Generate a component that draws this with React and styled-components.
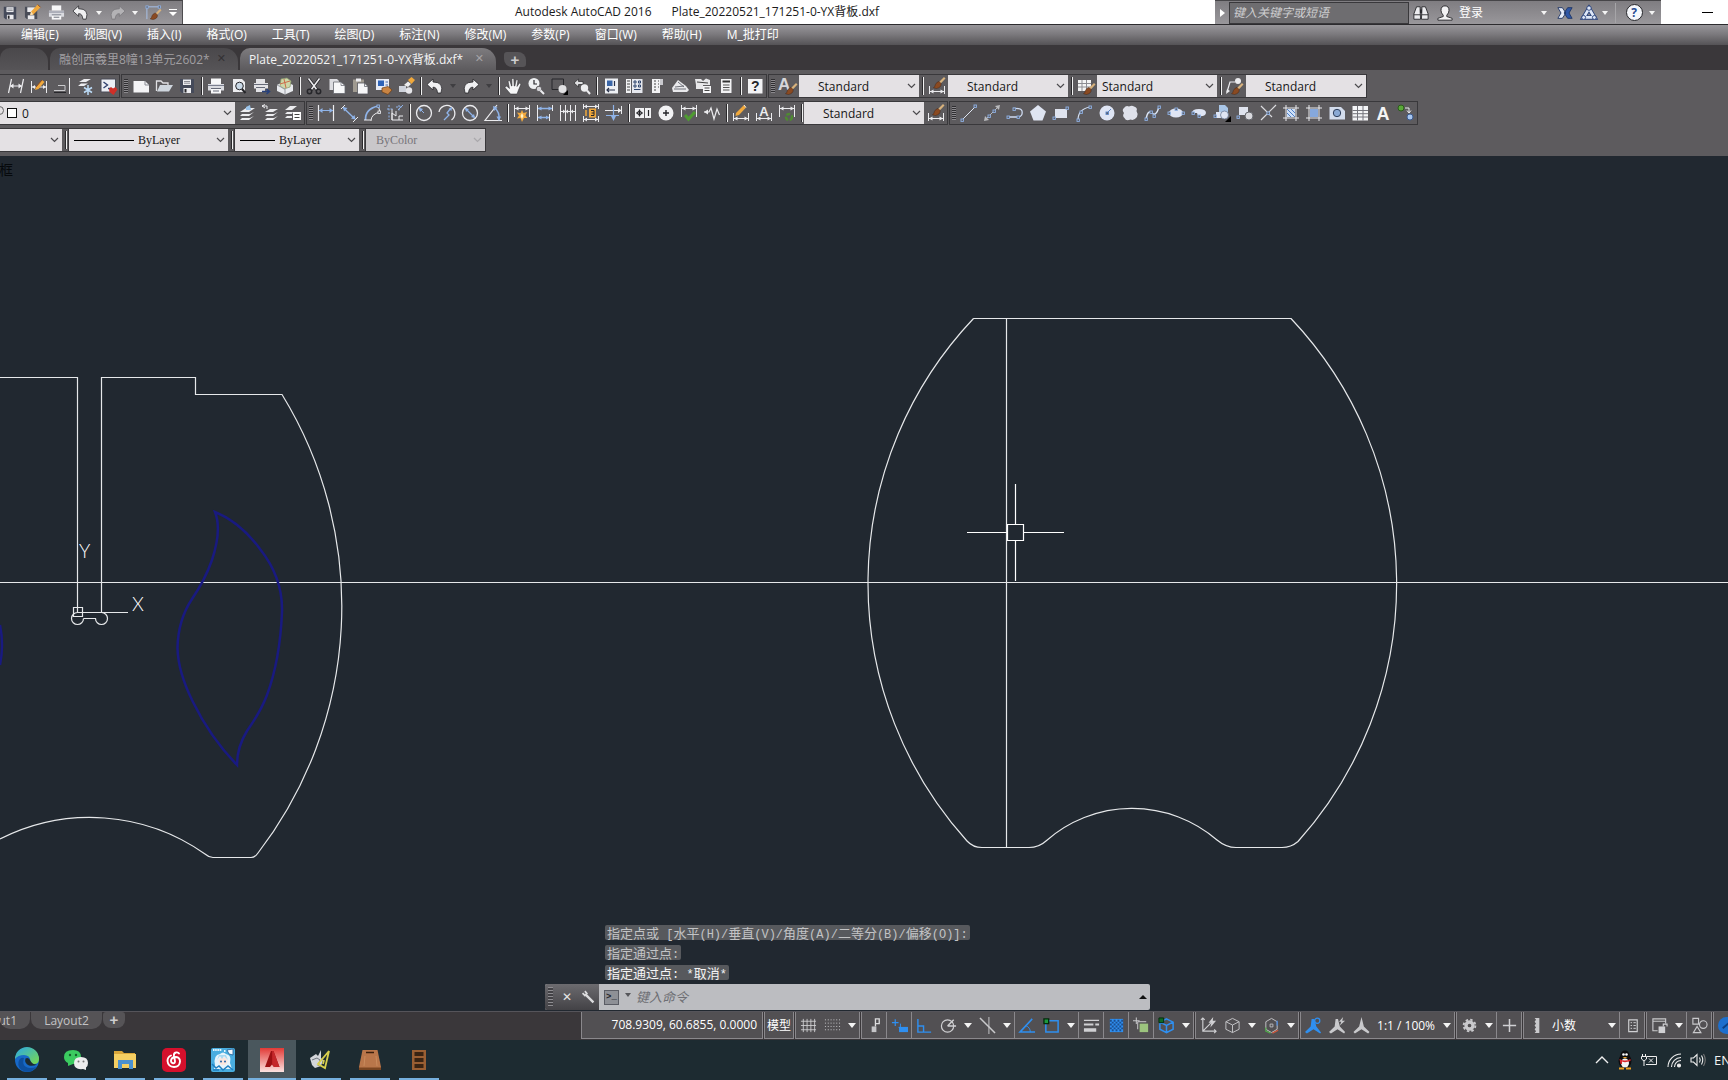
import React from "react";
import styled, { createGlobalStyle, css } from "styled-components";

const UI = '"Open Sans", "Noto Sans CJK SC", sans-serif';
const W = "#ececef";
const B = "#8fb3e8";
const G = "#b9babd";
const K = "#26262a";
const O = "#f0a83c";
const BR = "#8a4a22";
const BL = "#2f8ff0";

const Global = createGlobalStyle`
  *, *::before, *::after { box-sizing: border-box; }
  html, body, #root { height: 100%; }
  body { margin: 0; overflow: hidden; font-family: ${UI}; font-size: 13px; background: #212830; }
  button, input, select { font: inherit; color: inherit; margin: 0; padding: 0; border: 0; border-radius: 0; background: none; outline: 0; }
`;

/* ---------- icon drawing ---------- */
const p = (d, stroke = W, fill = "none", w = 1) => <path key={d} d={d} stroke={stroke} fill={fill} strokeWidth={w} />;
const f = (d, fill = W) => <path key={d} d={d} stroke="none" fill={fill} />;
const dot = (x, y, c = B) => <rect key={`${x}-${y}`} x={x - 1} y={y - 1} width="2.4" height="2.4" fill="#5d5b5e" stroke={c} strokeWidth=".9" />;
const brush = (x, y) => (
  <g key={`b${x}${y}`} transform={`translate(${x} ${y})`} stroke="none">
    <path d="M10 -1 11.500 .5 6.500 5.800 4.800 4.200Z" fill="#d8b27c" />
    <path d="M5 3.400 7.200 5.600Q7.500 9.500 2.500 10.500L-.5 9.800Q1.200 8.500 1.400 6.500 2.500 4 5 3.400Z" fill={BR} stroke="#3a1d0c" strokeWidth=".4" />
  </g>
);
const dim = <React.Fragment key="dim">{p("M1.500 1V13M16.500 1V13M2 4.500H16")}{f("M2 4.500 5.500 2.500V6.500ZM16 4.500 12.500 2.500V6.500Z")}</React.Fragment>;
const lowDim = <React.Fragment key="ld">{p("M1.500 9V17M16.500 9V17M2 14.500H16")}{f("M2 14.500 5.500 12.500V16.500ZM16 14.500 12.500 12.500V16.500Z")}</React.Fragment>;
const BACK = "M7 2 1 7.500 7 13V10.200Q11 10 11.500 16H15Q18.500 5 7 5Z";
const FORTH = "M11 2 17 7.500 11 13V10.200Q7 10 6.500 16H3Q-.5 5 11 5Z";

const ICONS = {
  save: [f("M2 2H16V16H4L2 14Z", "#454a5a"), f("M5 2.500H13V8H5Z"), f("M5.500 11H13V16H5.500Z"), f("M6.500 12H8.500V15.500H6.500Z", K), p("M6 4.500H12M6 6.200H12", "#8a8c94")],
  saveAs: [f("M1 3H14V16H3L1 14Z", "#4a4d58"), f("M3.500 3.500H11.500V8.500H3.500Z"), f("M4 12H11V16H4Z"), f("M14.500 0.500 17.500 3.500 10 11 6.500 12 7.500 8Z", O), p("M14.500 .5 17.500 3.500", BR), f("M7.500 8 10 11 6.500 12Z", "#f6e0b5")],
  print: [f("M4 1.500H14V7H4Z", "#f7f7f8"), f("M1 7H17V13.500H1Z", "#dadbe0"), p("M1 8.500H17", "#7c8090"), f("M4 11H14V16.500H4Z", "#f7f7f8"), p("M4 11.500H14M6 14H12", "#666a78")],
  undo: [p(BACK, K, "#f0f0f2", .8)],
  redo: [p(FORTH, K, "#f0f0f2", .8)],
  redoDim: [p(FORTH, "#77767a", "#b3b2b5", .8)],
  workspace: [p("M2 16V3H15", "#a9c3ec"), dot(2, 3), dot(15, 3), brush(6, 6)],
  binoc: [f("M4 2H8V6L8.500 16H1V10Z"), f("M10 2H14L17 10V16H9.500L10 6Z"), p("M4 2H8V6L8.500 16H1V10ZM10 2H14L17 10V16H9.500L10 6ZM1 11H8M10 11H17", K), f("M8 5H10V9H8Z", K)],
  user: [p("M9 1Q13.500 1 13.500 6 13.500 9 11 11.500V13L17 15V17H1V15L7 13V11.500Q4.500 9 4.500 6 4.500 1 9 1Z", K, "#f3f3f5")],
  exchange: [f("M1 3H6L10 9 6 15H1L4.500 9Z", "#e5ebf7"), f("M17 3H12L8 9 12 15H17L13.500 9Z", "#2f57a6"), p("M1 3H6L10 9 6 15H1L4.500 9ZM17 3H12L8 9 12 15H17L13.500 9Z", "#1e3566")],
  a360: [p("M9 4 15 14H3Z", "#27407a", "none", 5), p("M9 4 15 14H3Z", "#dfe8f8", "none", 3), <circle key="a" cx="9" cy="3.500" r="2.500" fill="#dfe8f8" stroke="#27407a" />, <circle key="b" cx="3" cy="14" r="2.200" fill="#dfe8f8" stroke="#27407a" />, <circle key="c" cx="15" cy="14" r="2.200" fill="#dfe8f8" stroke="#27407a" />],
  dimA: [p("M1.500 16 4.500 2M13.500 16 16.500 2M3 9H15", W, "none", 1.200), f("M3 9 6.500 6.500V11.500ZM15 9 11.500 6.500V11.500Z")],
  dimB: [p("M1.500 4V16M16.500 4V16M2 10H16"), f("M2 10 5 8V12ZM16 10 13 8V12Z"), f("M6 10 12 3 14.500 5 8.500 12 5 13Z", O), p("M6 10 12 3", BR)],
  dimC: [p("M16.500 1V17", W), p("M1 13.500H12V8.500H5", "#c9c9cc"), p("M1 15.500H13", K)],
  freeze: [f("M3 5 8 2H15L10 5ZM2 9 5 6.500H12L8 9Z"), p("M12 8V18M8 10.500 16 15.500M16 10.500 8 15.500", "#bcdcf8", "none", 1.500)],
  cmd: [p("M2 2H16.500V15H2Z", "#4a4d58", "#eceef4"), p("M4.500 5 8.500 8 4.500 11M9 11.500H12", "#30406e", "none", 1.400), f("M10 12 12 10 14 11.500 16.500 10 18.500 12.500 14.500 18 10.500 15Z", "#cf2f28")],
  newFile: [f("M1.500 4H13L17 8V15.500H1.500Z", "#f4f4f6"), p("M13 4V8H17", "#8a8c94")],
  open: [p("M1.500 14V4H6L8 6H13V8", "#e0e0e4", "none", 1.300), f("M5 8H18L14 14.500H2Z", "#cfd6de")],
  preview: [f("M3 2H12L15 5V15H3Z"), <circle key="c" cx="9.500" cy="9" r="3.800" fill="#c9d8e6" stroke={K} />, p("M12 12 15.500 16", K, "none", 2)],
  publish: [f("M3 2H12V6H3ZM1 6H15V11.500H1ZM3 10H12V15H3Z", "#e2e2e6"), p("M1 7.500H15M3 10.500H12", "#666a78"), p("M9 14.500H16M13.500 12 16.500 14.500 13.500 17", "#27407a", "none", 1.500)],
  print3d: [f("M1 8 9 4 17 8V14L9 17.500 1 14Z", "#e8eaee"), p("M5 2 11 1 15 4 14 10 8 12 4 9Z", "#8a9a6a", "#cdd8a8", .7), p("M8 2 10 11M4 7 14 4", "#ce6b4a"), p("M1 8 9 12V17", "#9a9ca4")],
  cut: [p("M3.500 1.500 12 13M14.500 1.500 6 13", K, "none", 3), p("M3.500 1.500 12 13M14.500 1.500 6 13", W, "none", 1.500), <circle key="a" cx="4.500" cy="14.500" r="2.200" stroke={K} strokeWidth="1.500" />, <circle key="b" cx="13.500" cy="14.500" r="2.200" stroke={K} strokeWidth="1.500" />],
  copy: [f("M1.500 2H9L11 4V13H1.500Z", "#dcdce0"), p("M5.500 5H13L17 8.500V16.500H5.500Z", "#66686e", "#f8f8f9", .8), p("M13 5V8.500H17", "#73757d", "none", .8)],
  paste: [f("M2 2.500H13V15H2Z", "#a09a90"), f("M5 1.500H10V4.500H5Z"), p("M6.500 6H13.500L17 9.500V17H6.500Z", "#55575d", "#f6f6f8", .8), p("M13.500 6V9.500H17", "#66686e", "none", .8)],
  match: [f("M2 2H15V13H2Z", "#e6eaf4"), f("M4 3.500H10V9H4Z", "#2e63b8"), p("M11.500 5H14M11.500 8H14", "#4a6aa8"), p("M8 11 14 9.500 18 13 14 17.500 8 15Z", "#6a3c14", "#c98443", .7)],
  matchP: [f("M2 9H9V15H2Z", "#cfd3dc"), <circle key="c" cx="12" cy="13.500" r="3.200" fill="#e6e6ea" stroke="none" />, f("M11 3 14.500 7 18 3 14.500 0Z", O), f("M7 8 11 4.500 14 7 11 10Z", "#eee")],
  hand: [p("M6.500 17 1 10.500 2.500 9 5.500 11.500 4 4 5.800 3.500 7.500 9H8L7.800 1.500H9.800L10.200 9H10.800L12.300 2.500 14 3 13 9.500 15.500 6 17 7 14.500 13 13 17Z", K, "#f6f6f7", .5)],
  zoomRt: [<circle key="c" cx="7" cy="6.500" r="5.500" fill="#eef0f2" stroke="none" />, p("M7 3V7H10", K, "none", 1.200), <circle key="d" cx="12" cy="12" r="2.800" fill="#d4d4d8" stroke="#5d5b5e" />, p("M13.500 13.500 17 17", W, "none", 2)],
  zoomWin: [p("M2 2H13.500V12.500H2Z", K), <circle key="d" cx="12.500" cy="12" r="4" fill="#e2e2e4" stroke="none" />, f("M18 13V18H13Z", "#000")],
  zoomPrev: [p("M1 6 5.500 2V4.500H10V7.500H5.500V10Z", K, "#e0e0e2", .7), <circle key="d" cx="11.500" cy="11" r="3.700" fill="#eeeef0" stroke="none" />, p("M14 13.500 17 17", W, "none", 2)],
  props: [f("M3 1.500H16V16.500H3Z", "#eef0f4"), f("M5 3.500H10.500V9H5Z", "#3a66a8"), p("M12.500 4V9M5 13H13M7 11 5 13 7 15", "#27304a", "none", 1.200)],
  dc: [f("M1 2H6V16H1Z", "#f2f2f4"), p("M2 4H5M2 7H5M2 10H5M2 13H5", "#444"), f("M7 2H17.500V16H7Z", "#e6e8ee"), p("M9 4H11V6H9ZM13.500 4H15.500V6H13.500ZM9 8H11V10H9ZM13.500 8H15.500V10H13.500ZM9 12.500H15.500", "#30466e")],
  tool: [f("M4 2H12V16H4Z", "#f2f2f4"), f("M12 2H15V8H12Z", "#c9c9ce"), p("M6 4H8M6 7H8M6 10H8M6 13H8M10 4H11M10 7H11M10 10H11", "#444")],
  sheet: [f("M1 11 7 3 15 9 18 13 16 15H2Z", "#e9e9ec"), p("M3 12H15M4 10 13 9M7 5 13 10", "#70727a")],
  markup: [f("M1 2H7L9 4 12 1.500 16 3V8H9V12H2V8Z", "#e8e8ea"), f("M9 9H17V16H9Z", "#f6f6f8"), p("M10.500 11H15.500M10.500 13.500H15.500M3 5 14 6", "#444")],
  calc: [f("M4 2H14.500V16H4Z", "#f2f2f4"), p("M5.500 4.500H13", "#333", "none", 2), p("M6 8H12.500M6 10.500H12.500M6 13H12.500", "#555", "none", 1.200)],
  help: [f("M2 2H16.500V16.500H2Z", "#f2f2f4"), <text key="t" x="9.200" y="14" textAnchor="middle" fontFamily="Liberation Sans" fontWeight="700" fontSize="14" fill={K} stroke="none">?</text>],
  styleA: [<text key="t" x="-1" y="13" fontFamily="Liberation Sans" fontSize="17" fontWeight="700" fill="#d6d6da" stroke="none">A</text>, brush(7, 7)],
  styleD: [brush(6, 1), lowDim],
  styleT: [f("M1 3H14V14H1Z", "#f4f4f4"), p("M1 6.500H14M1 10H14M5 3V14M9.500 3V14", "#8d8d92"), brush(7, 7)],
  styleL: [p("M1 15 4 5H9", W, "none", 1.200), f("M0 17 1 12 4 14Z"), <circle key="c" cx="12" cy="4" r="3" fill={W} stroke="none" />, brush(6, 7)],
  layer1: [f("M2 8 8 4H17L11 8ZM2 12 4 10H12L16 8 11 12ZM2 16 4 14H12L16 12 11 16Z"), f("M8 3 12 1 13 6H8Z", "#9cc4ea")],
  layer2: [f("M4 8 9 5H17L12 8ZM4 12 6 10H13L17 8 12 12ZM4 16 6 14H13L17 12 12 16Z"), p("M1 2H6M1 2 4 .5M1 2 4 4M6 2V5")],
  layer3: [f("M1 6 6 2H13L8 6ZM1 10 3 8H9L8 10ZM1 14 3 12H8V14Z"), f("M9 8H17V16H9Z", "#fff"), p("M10.500 10.500H15.500M10.500 13.500H15.500", "#444")],
  dLin: [p("M1.500 1V17M16.500 1V17", W, "none", 1.200), p("M2 6.500H16", B), f("M2 6.500 5.500 4V9ZM16 6.500 12.500 4V9Z", B)],
  dAli: [p("M1 5 5 1M13 18 18 13"), p("M3 3.500 15 15", B, "none", 1.400), f("M3 3 7.500 4 4 7.500ZM15.500 15.500 11 14.500 14.500 11Z", B)],
  dArc: [p("M2.500 16Q2 5 15 2", B, "none", 1.700), p("M8 17Q8 10 17 8M1 16H8M15 1 17 8"), dot(15, 2), dot(16, 8, W)],
  dOrd: [p("M6 5V16H17M6 16V9L10 12V7M13 16V12H17"), <path key="d" d="M1 5H8M3 1V16M10 3H17M13 1V8" stroke={B} strokeDasharray="2 1.500" />, p("M12 6 17 1", B)],
  dRad: [<circle key="c" cx="9" cy="9" r="7.500" stroke={W} strokeWidth="1.300" />, p("M9 9 4 4", B), f("M3.500 3.500 8 5 5 8Z", B)],
  dJog: [p("M1 8A8 8 0 1 1 13.500 16", W, "none", 1.300), p("M6 16 11 11 9 9 13 4", B, "none", 1.300), f("M14 3 13.500 7 10.500 5Z", B)],
  dDia: [<circle key="c" cx="9" cy="9" r="7.500" stroke={W} strokeWidth="1.300" />, p("M4.500 4.500 13.500 13.500", B, "none", 1.200), f("M4 4 8 5 5 8ZM14 14 10 13 13 10Z", B)],
  dAng: [p("M13 1 1 16.500H18", W, "none", 1.200), p("M10 3Q16 8 15 16", B, "none", 1.500), f("M9 2 13.500 3.500 10 7ZM15 17 12.500 12.500H17Z", B)],
  dQuick: [dim, f("M9 6 10.500 9 14 8 12.500 11.500 14.500 14 11 14 9 18 7.500 14 4 14.500 6 11.500 4 8.500 7.500 9Z", O), f("M9 9 10.500 12 9 15 7.500 12Z", "#fff1c4")],
  dBase: [p("M1.500 1V17M16.500 1V7M13.500 10V17"), p("M2 4.500H16M2 13.500H13", B, "none", 1.300), f("M2 4.500 5.500 2.500V6.500ZM16 4.500 12.500 2.500V6.500ZM2 13.500 5.500 11.500V15.500ZM13 13.500 10 11.500V15.500Z", B)],
  dCont: [p("M1.500 1V17M6.500 1V17M11.500 1V17M16.500 1V17M2 7.500H16"), f("M6.500 7.500 4 5.500V9.500ZM6.500 7.500 9 5.500V9.500ZM11.500 7.500 14 5.500V9.500Z")],
  dSpace: [p("M1.500 0V5M16.500 0V5M1.500 12V18M16.500 12V18M2 2.500H16M2 15.500H16"), f("M2 2.500 5 .5V4.500ZM16 2.500 13 .5V4.500ZM2 15.500 5 13.500V17.500ZM16 15.500 13 13.500V17.500Z"), f("M7 4.500H14V13.500H7Z", O), p("M9 6.500H12V11.500H9M9.500 9H12", K), p("M4 6V12", O, "none", 1.500)],
  dBreak: [p("M0 6.500H17M16.500 2V10"), f("M16.500 6.500 13 4V9Z"), p("M8.500 1V15M1 11.500H14", B, "none", 1.200), f("M8.500 17 6 12H11Z", B)],
  tol: [f("M1 4H10V14H1ZM11 4H17V14H11Z", "#f2f2f4"), <circle key="c" cx="5.500" cy="9" r="2" stroke={K} />, p("M5.500 5.500V12.500M2 9H9M14.500 6V12", K, "none", 1.200)],
  center: [<circle key="c" cx="9" cy="9" r="7.500" fill="#f2f2f4" stroke="none" />, p("M9 6V12M6 9H12", K, "none", 1.400)],
  inspect: [dim, p("M5 11 8.500 15 15 8", "#4f9a32", "none", 3.200)],
  jogLin: [p("M1 8H6L8 4 11 15 14 5 16.500 11", W, "none", 1.200), f("M1 8 5 5.500V10.500Z")],
  dimEd: [lowDim, f("M4 9 12 1 14 3.500 7 11 3.500 12Z", O), p("M12 1 14 3.500", W)],
  dimTx: [lowDim, <text key="t" x="9" y="11.500" textAnchor="middle" fontFamily="Liberation Sans" fontWeight="700" fontSize="13" fill={W} stroke="none">A</text>],
  dimUp: [dim, <circle key="c" cx="11" cy="13" r="3" stroke="#4f8a32" strokeWidth="2.400" strokeDasharray="4 1.500" />],
  line: [p("M3 15 15 3", "#dfe6f2"), dot(2, 16), dot(15, 2)],
  xline: [p("M3 15 15 3", G), f("M1 17 2 12 6 16ZM17 1 12 2 16 6Z", G), dot(6, 12), dot(11, 7)],
  pline: [p("M3 13H12Q17 12.500 16 7 15 4 7 4.500", "#cfdcf2", "none", 1.300), dot(2, 13), dot(12, 13), dot(8, 5)],
  polygon: [f("M9 1 17 7.500 13.500 16.500H4.500L1 7.500Z", "#dfe5f2")],
  rect: [f("M3 5H15V14H3Z", "#dfe3ee"), dot(2, 14), dot(15, 4)],
  arc: [p("M3 16Q3 5 15 3", "#d5e0f2", "none", 1.200), dot(3, 16), dot(6, 8), dot(15, 3)],
  circle: [<circle key="c" cx="9" cy="9" r="7.500" fill="#dfe5f4" stroke="none" />, p("M9 9 13 5", "#5b86c8"), dot(9, 9, "#5b86c8")],
  cloud: [f("M3 4Q5 1 8 2.500 11 1 13 2.500 17 3.500 15.500 7 17.500 10 16 13 13 17 9.500 15.500 5 17.500 3.500 14 1 12 3 9 .5 6 3 4Z", "#dfe1ea")],
  spline: [p("M2 15Q4 5 8 9T15 3", "#dce6f6", "none", 1.400), dot(2, 15), dot(7, 8), dot(10, 12), dot(15, 3)],
  ellipse: [<ellipse key="c" cx="9" cy="9" rx="7" ry="4.500" fill="#dfe5f4" stroke="none" />, dot(2, 9), dot(16, 9), dot(9, 5)],
  ellArc: [f("M2 9Q2 5 9 5T16 9Q15 13 8 12L7 9Z", "#dfe5f4"), dot(3, 9), dot(9, 12)],
  insert: [f("M6 1H12L15 4V9H6Z", "#a9c6e8"), f("M3 8H10V14H3Z", "#dfe5f4"), <circle key="c" cx="11.500" cy="11" r="4" fill="#dfe5f4" stroke="#5d6f8c" strokeWidth=".7" />, f("M18 12V18H12Z", "#000"), dot(2, 12)],
  block: [f("M3 3H12V11H3Z", "#dfe3ee"), <circle key="c" cx="13" cy="12" r="4" fill="#d9d9de" stroke="#66686e" />, dot(2, 13)],
  point: [p("M2 2 9 9 17 1M2 16 9 9 13 13", "#dcdce0", "none", 1.200), dot(9, 9)],
  hatch: [p("M1 4H17M1 14H17M4 1V17M14 1V17"), f("M5 5H13V13H5Z", "#cfe0f8"), p("M5 9 9 13M5 5 13 13M9 5 13 9", "#4f80c8")],
  gradient: [p("M1 4H17M1 14H17M4 1V17M14 1V17"), f("M5 5H13V13H5Z", "#86a8dc")],
  region: [f("M1.500 3H13L17 7V15.500H1.500Z", "#d3dcec"), <circle key="c" cx="9" cy="9" r="3.700" fill="#8aa9d4" stroke="#2f3f5c" />],
  table: [f("M1.500 2H17V16.500H1.500Z", "#f4f5f7"), p("M1.500 6.500H17M1.500 9.700H17M1.500 13H17M6.500 2V16.500M12 2V16.500", "#74757c")],
  mtext: [<text key="t" x="9" y="15.500" textAnchor="middle" fontFamily="Liberation Sans" fontSize="18" fontWeight="700" fill="#f4f4f5" stroke="none">A</text>],
  addSel: [<circle key="a" cx="4" cy="4" r="3" fill="#5aa83a" stroke="#2b5a1b" />, <circle key="b" cx="13" cy="13" r="3" fill="#a8c6f0" stroke="#3a5a90" />, p("M8 4H12V8M10 6.500 12 9 14 6.500", W)],
  wrench: [p("M6 6 16 16", "#dcdcde", "none", 3), p("M2 4 5 7 7.500 4.500 5 1.500", "#dcdcde", "none", 2.200)],
  /* status bar */
  grid: [p("M3.500 2V16M7.500 2V16M11.500 2V16M15.500 2V16M1 4.500H17M1 9H17M1 13.500H17", "#d2d2d4", "none", .9)],
  snap: [<path key="s" d="M1 3H17M1 6.500H17M1 10H17M1 13.500H17" stroke="#cfcfd2" strokeDasharray="1 2" />],
  infer: [p("M10 10V2H14V7H10", "#dcdcde", "none", 1.400), f("M6 10H11V16H6Z", "#c5c5c8")],
  dyn: [p("M1 6H8M4.500 2.500V9.500", BL, "none", 1.300), p("M10 7V11H8", BL), f("M8.500 10.500H18V16H8.500Z", BL)],
  ortho: [p("M2 2V16H16M2 9.500H8V16", BL, "none", 1.500)],
  polar: [<circle key="c" cx="8" cy="9.500" r="6.500" stroke="#d0d0d3" strokeWidth="1.300" />, p("M8 9.500H17M8 9.500 14.500 3", "#d0d0d3", "none", 1.500)],
  iso: [p("M1 1 17 17", "#c9c9cc", "none", 1.600), p("M10.500 0V18", "#c9c9cc", "none", 1)],
  otrack: [p("M14 2 1 16H17", BL, "none", 1.600), p("M7 9Q12 11 12 16", BL)],
  osnap: [p("M3 4H16V16H3Z", BL, "none", 1.600), p("M1 2H6V7H1Z", "#032a0c", "#1d9a3c", 1.400)],
  lwt: [f("M1 3H17V4.200H1ZM1 7H11V9H1ZM13 7H17V9H13ZM1 12H14V15.500H1Z", "#d0d0d3")],
  transp: [f("M2 2H16V16H2Z", BL), <path key="x" d="M2 4H16M2 8H16M2 12H16" stroke="#1c4f90" strokeWidth="2" strokeDasharray="2 2" />, <path key="y" d="M4 6H16M4 10H16M4 14H16" stroke="#1c4f90" strokeWidth="2" strokeDasharray="2 2" />],
  cycle: [f("M7 7H16V16H7Z", "#9cc47e"), p("M5 13V5H14M0 4H7M3.500 .5V7.500", "#d0d0d3")],
  osnap3: [p("M9 2 16 5.500V13L9 16.500 2 13V5.500ZM2 5.500 9 9 16 5.500M9 9V16", BL, "none", 1.600), p("M1 1H6V6H1Z", "#032a0c", "#0f6a24", 1)],
  ducs: [p("M3 1V15H17M3 15 13 5M1 3 3 1 5 3M15 13 17 15 15 17", "#d0d0d3", "none", 1.200), f("M14 0 9 6H12L11 11 17 4H13.500Z", "#d0d0d3")],
  cube: [p("M9 1.500 16 5V13L9 16.500 2 13V5ZM2 5 9 8.500 16 5M9 8.500V16.500", "#c5c5c8")],
  gizmo: [p("M9 1.500 15 5V13L9 16.500 3 13V5Z", "#c5c5c8"), p("M3 11 3 15 8 17", "#4fa84a", "none", 1.400), p("M10 17 16 14", "#d0573a", "none", 1.400), p("M15 4V9", "#4a86d8", "none", 1.400), p("M7.500 7.500H10.500V10.500H7.500Z", G)],
  annoB: [f("M7 2H10L12 10 17 16.500 16 17.500 9 13 2 17.500 0 16 6 10Z", BL), <circle key="c" cx="13" cy="4" r="2.700" stroke={BL} strokeWidth="1.300" />],
  annoY: [f("M7 2H9.500L11.500 10 17 16 16 17.500 9 13 2 17.500 0 16 6 10Z", "#c9c9cc"), f("M15 0 10.500 5H13L11.500 9 17 4H14Z", "#c9c9cc")],
  annoA: [f("M9 0 11.500 10 17.500 16 16 17.500 9 13 2 17.500 .5 16 6.500 10Z", "#c9c9cc")],
  gear: [<circle key="c" cx="9" cy="9" r="3.700" stroke="#c9c9cc" strokeWidth="3.500" />, <circle key="d" cx="9" cy="9" r="6.200" stroke="#c9c9cc" strokeWidth="2" strokeDasharray="2.600 2.270" />],
  plus: [p("M9 2V16M2 9H16", "#d0d0d3", "none", 1.600)],
  ruler: [f("M7 1H12V17H7L8.500 15 7 13 8.500 11 7 9 8.500 7 7 5 8.500 3Z", "#c9c9cc")],
  qprops: [p("M5 3H14V15.500H5Z", "#d0d0d3", "none", 1.200), p("M7 6H8.500M10 6H12.500M7 9H8.500M10 9H12.500M7 12H8.500M10 12H12.500", "#d0d0d3")],
  lockUi: [p("M7 14.500H2V2H15.500V7M2 4.500H15.500", "#c9c9cc", "none", 1.200), f("M8 10H15V17H8Z", "#d0d0d3"), p("M13 10V7.500H17V10", "#d0d0d3", "none", 1.200)],
  isolate: [p("M2 1.500H8V7.500H2Z", "#c9c9cc", "none", 1.200), <circle key="c" cx="13" cy="8" r="4" stroke="#c9c9cc" strokeWidth="1.200" />, p("M6.500 10 10.500 16.500H2.500Z", "#c9c9cc", "none", 1.200)],
  perf: [<circle key="c" cx="9" cy="9" r="9" fill="#1d6fce" stroke="none" />, p("M5 12 12 6", "#0d3f80", "none", 2)],
};

const Svg = styled.svg`display: block; flex: none; overflow: visible;`;
const Icon = ({ name, size = 18 }) => (
  <Svg width={size} height={size} viewBox="0 0 18 18" fill="none" stroke={W} aria-hidden="true">{ICONS[name]}</Svg>
);
const Chevron = () => (
  <Svg width="9" height="6" viewBox="0 0 9 6" fill="none" stroke="currentColor" strokeWidth="1.200"><path d="M1 1 4.500 4.500 8 1" /></Svg>
);

/* ---------- shell ---------- */
const Shell = styled.div`display: flex; flex-direction: column; height: 100vh; overflow: hidden;`;

const TitleBar = styled.header`
  display: flex; height: 25px; flex: none; background: #fff; border-bottom: 1px solid #2c2b2e; color: #1b1b1b;
`;
const metal = css`background: linear-gradient(#7f7d81, #99979b); border-top: 1px solid #464548;`;
const QuickAccess = styled.div`
  ${metal} display: flex; align-items: center; width: 183px; flex: none; border-right: 1px solid #4e4d50;
`;
const QuickButton = styled.button`
  display: flex; align-items: center; justify-content: center; width: ${(q) => q.$w || 24}px; height: 22px; flex: none;
`;
const Caret = styled.i`
  display: block; flex: none; border: ${(q) => q.$s || 3}px solid transparent; border-bottom: 0;
  border-top: ${(q) => (q.$s || 3) + 1}px solid ${(q) => q.$c || "#f4f4f4"};
`;
const More = styled.i`
  display: block; width: 8px; border-top: 1px solid #fff; padding-top: 2px;
  &::after { content: ""; display: block; border: 4px solid transparent; border-top-color: #fff; border-bottom: 0; }
`;
const Title = styled.h1`
  display: flex; gap: 20px; flex: 1; margin: 0; padding-left: 332px; font-size: 12px; font-weight: 400; line-height: 23px; white-space: pre;
`;
const InfoCenter = styled.div`${metal} display: flex; align-items: center; width: 446px; flex: none; color: #fff;`;
const InfoArrow = styled.button`
  width: 14px; height: 22px; display: flex; align-items: center; justify-content: center;
  &::after { content: ""; border: 4px solid transparent; border-left: 5px solid #fff; border-right: 0; }
`;
const Search = styled.input`
  width: 180px; height: 22px; background: #6e6d70; border: 1px solid #39383b; padding: 0 3px; font-size: 12px; font-style: italic;
  &::placeholder { color: #cfcfd1; opacity: 1; }
`;
const SignIn = styled.button`display: flex; align-items: center; justify-content: space-between; width: 96px; padding: 0 6px 0 2px; font-size: 12px; line-height: 22px; color: #fff;`;
const Rule = styled.span`width: 1px; height: 20px; background: #a6a5a8; margin: 0 6px;`;
const HelpBadge = styled.button`
  width: 17px; height: 17px; border: 1px solid #26262a; border-radius: 50%; background: #f5f7fb; color: #274a92;
  font-weight: 700; font-size: 12px; line-height: 15px; text-align: center; flex: none;
`;
const Minimize = styled.button`
  width: 67px; flex: none; display: flex; align-items: center; justify-content: center; padding-left: 26px;
  &::after { content: ""; width: 11px; height: 1px; background: #000; }
`;

const MenuBar = styled.nav`
  display: flex; align-items: center; gap: 1px; height: 20px; flex: none; padding-left: 9px;
  background: linear-gradient(#98969a, #7c7a7e 45%, #555356); color: #fff;
`;
const MenuItem = styled.button`padding: 0 12px; font-size: 12px; line-height: 20px; white-space: nowrap;`;

const FileTabs = styled.div`
  display: flex; align-items: flex-end; gap: 2px; height: 25px; flex: none; background: #3a373a; padding-top: 3px;
`;
const FileTab = styled.button`
  display: flex; align-items: center; justify-content: space-between; height: 22px; width: ${(q) => q.$w}px; flex: none;
  padding: 0 12px 0 9px; font-size: 12px; white-space: nowrap; border-radius: 10px 14px 0 0;
  color: ${(q) => (q.$on ? "#f4f4f4" : "#a19fa2")};
  background: ${(q) => (q.$on ? "linear-gradient(#7d7b7e, #5d5b5e)" : "linear-gradient(#4a484b, #565457)")};
`;
const Close = styled.span`color: ${(q) => (q.$on ? "#a5a3a6" : "#333134")}; font: 700 11px/20px "DejaVu Sans", sans-serif;`;
const PlusTab = styled.button`
  display: flex; align-items: center; justify-content: center; width: 22px; height: ${(q) => q.$h || 15}px; margin: ${(q) => q.$m}; flex: none;
  background: #565457; border-radius: ${(q) => q.$r}; color: #cdccce; font: 700 15px/14px "Liberation Sans", sans-serif;
`;

const Toolbars = styled.section`
  display: flex; flex-direction: column; gap: 3px; height: 86px; flex: none; padding-top: 4px; background: #5d5b5e; overflow: hidden;
`;
const ToolRow = styled.div`display: flex; gap: ${(q) => q.$gap}px; height: 24px; flex: none;`;
const Group = styled.div`
  display: flex; align-items: center; height: 24px; flex: none; padding-left: ${(q) => q.$pad || 0}px;
  border: 1px solid #39383b; border-width: 1px 1px 1px ${(q) => (q.$open ? 0 : 1)}px;
`;
const Grip = styled.span`
  width: 4px; height: 14px; margin: 0 1px 0 2px; flex: none;
  background: repeating-linear-gradient(#2f2e31 0 1px, #8b898d 1px 2px);
`;
const Tool = styled.button`width: 23px; height: 22px; flex: none; display: flex; align-items: center; justify-content: center;`;
const DropTool = styled(Tool)`width: 13px;`;
const Divider = styled.span`
  width: 2px; height: 18px; margin: 0 1px 0 3px; flex: none; background: linear-gradient(90deg, #2a292c 50%, #f2f2f2 50%);
`;
const SelectWrap = styled.label`
  position: relative; display: flex; align-items: center; width: ${(q) => q.$w}px; height: 22px; flex: none;
  background: ${(q) => (q.$off ? "#c9c7ca" : "#e4e1e4")}; color: ${(q) => (q.$off ? "#77757a" : "#161616")};
  select { appearance: none; width: 100%; height: 22px; padding-left: ${(q) => q.$pad}px; font: ${(q) => (q.$serif ? '12px "Liberation Serif", serif' : `12px ${UI}`)}; opacity: 1; color: inherit; }
  > svg:last-child { position: absolute; right: 3px; color: #4c4b4e; opacity: ${(q) => (q.$off ? 0.25 : 1)}; }
`;
const LineSample = styled.span`position: absolute; left: 5px; width: ${(q) => q.$w}px; height: 1px; background: #000;`;
const Swatch = styled.span`position: absolute; left: 7px; width: 10px; height: 10px; background: #fff; border: 1px solid #111;`;
const Lamp = styled.span`position: absolute; left: -5px; top: 4px; width: 9px; height: 9px; border: 1px solid #666; border-radius: 50%;`;

const Select = ({ label, value, line, layer, w = 120, pad = 19, serif, off }) => (
  <SelectWrap $w={w} $pad={pad} $serif={serif} $off={off}>
    <select aria-label={label} defaultValue={value} disabled={off}><option>{value}</option></select>
    {line && <LineSample $w={line} />}
    {layer && <><Lamp /><Swatch /></>}
    <Chevron />
  </SelectWrap>
);
/* "|" is a divider, "v" the arrow of the tool before it */
const Tools = ({ names }) => names.split(" ").map((n, i) => {
  if (n === "|") return <Divider key={i} />;
  if (n === "v") return <DropTool key={i} aria-label="more"><Caret $c="#3f3e41" /></DropTool>;
  return <Tool key={i} aria-label={n}><Icon name={n} /></Tool>;
});

/* ---------- drawing area ---------- */
const Canvas = styled.main`position: relative; flex: 1; min-height: 0; background: #212830; overflow: hidden;`;
const Drawing = styled.svg`display: block; width: 100%; height: 100%;`;
const CommandDock = styled.div`position: absolute; left: 545px; bottom: 1px; width: 605px;`;
const History = styled.div`display: flex; flex-direction: column; align-items: flex-start; gap: 5px; padding: 0 0 4px 60px;`;
const HistoryLine = styled.div`
  height: 15px; padding: 0 2px; border-radius: 2px; background: #57595d; white-space: pre;
  color: ${(q) => (q.$on ? "#f4f4f4" : "#c2c3c5")}; font: 13px/15px "Noto Sans CJK SC", sans-serif;
`;
const Ascii = styled.span`font: 12px/15px "Liberation Mono", monospace;`;
const CommandBar = styled.div`display: flex; height: 26px; border-radius: 2px; overflow: hidden; background: #bcbdc1;`;
const CommandTools = styled.div`display: flex; align-items: center; width: 54px; gap: 7px; padding-left: 3px; background: linear-gradient(#6c6b6f, #434246);`;
const CommandGrip = styled.span`width: 5px; height: 20px; background: repeating-linear-gradient(#8d8c90 0 1px, #434246 1px 3px);`;
const PlainButton = styled.button`display: flex; align-items: center; justify-content: center; color: #e4e4e6; font: 700 12px "DejaVu Sans"; width: 14px; height: 20px;`;
const Prompt = styled.button`
  width: 15px; height: 15px; margin: 0 6px 0 5px; align-self: center; background: #8e9096; border: 1px solid #5a5c64; color: #24262c;
  font: 700 9px/11px "Liberation Mono", monospace; flex: none;
`;
const CommandInput = styled.input`
  flex: 1; min-width: 0; padding-left: 5px; font-size: 13px; font-style: italic; color: #222;
  &::placeholder { color: #6d6e73; opacity: 1; }
`;
const UpButton = styled.button`
  width: 15px; display: flex; align-items: center; justify-content: center;
  &::after { content: ""; border: 4px solid transparent; border-top: 0; border-bottom-color: #111; }
`;

/* ---------- status bar ---------- */
const StatusBar = styled.footer`display: flex; height: 29px; flex: none; background: #3a373a; border-top: 1px solid #55545a; overflow: hidden;`;
const LayoutTabs = styled.div`display: flex; align-items: flex-start; flex: 0 0 581px;`;
const LayoutTab = styled.button`
  width: ${(q) => q.$w}px; height: 17px; flex: none; margin-right: 1px; background: #555356; border-radius: 0 0 10px 10px; color: #c4c3c5;
  font-size: 12px; line-height: 17px; text-align: ${(q) => q.$align || "center"}; direction: ${(q) => (q.$align ? "rtl" : "ltr")};
  padding: ${(q) => (q.$align ? "0 13px 0 0" : 0)}; white-space: nowrap; overflow: hidden;
`;
const StatusGroup = styled.div`
  display: flex; align-items: stretch; height: 27px; flex: none; margin-right: 1px; background: #525053; border: 1px solid #8a888c; border-top-width: 0; color: #fff;
`;
const Coords = styled.output`width: 180px; padding-right: 5px; text-align: right; line-height: 26px; font-size: 12px;`;
const StatusText = styled.button`padding: 0 ${(q) => q.$pad || 4}px; text-align: left; white-space: nowrap; font-size: 12px; color: #fff; min-width: ${(q) => q.$w || 0}px;`;
const StatusButton = styled.button`
  width: ${(q) => (q.$caret ? 15 : 24)}px; flex: none; display: flex; align-items: center; justify-content: center;
`;
const StatusSep = styled.span`width: 1px; background: #8a888c;`;

const StatusItems = ({ names }) => names.split(" ").map((n, i) => {
  if (n === "|") return <StatusSep key={i} />;
  if (n === "v") return <StatusButton key={i} $caret aria-label="more"><Caret $s={4} /></StatusButton>;
  return <StatusButton key={i} aria-label={n}><Icon name={n} size={17} /></StatusButton>;
});

/* ---------- taskbar ---------- */
const Taskbar = styled.footer`display: flex; align-items: stretch; justify-content: space-between; height: 40px; flex: none; background: #1d2b31; color: #f2f2f2; overflow: hidden;`;
const Apps = styled.div`display: flex; gap: 1px; padding-left: 3px;`;
const TaskButton = styled.button`
  display: flex; align-items: center; justify-content: center; width: 48px; position: relative;
  background: ${(q) => (q.$on ? "#4a575d" : "none")};
  &::after { content: ""; position: absolute; left: ${(q) => (q.$on ? 0 : 4)}px; right: ${(q) => (q.$on ? 0 : 4)}px; bottom: 0; height: 2px; background: #76b0de; }
`;
const Tray = styled.div`display: flex; align-items: center; gap: 8px; width: 133px; flex: none; white-space: nowrap;`;

const S = ({ children }) => <Svg width="24" height="24" viewBox="0 0 24 24" fill="none">{children}</Svg>;

const apps = [
  ["Edge", <S key="e"><defs><linearGradient id="eg" x1="0" y1="0" x2="1" y2="1"><stop offset="0" stopColor="#2aa7e8" /><stop offset="1" stopColor="#7bdb4a" /></linearGradient></defs><circle cx="12" cy="12" r="12" fill="#1769c8" /><path d="M0 11A12 12 0 0 1 24 11Q24 16 19 16 15 16 15.500 13 15 7 9 7 3 7 0 11Z" fill="url(#eg)" /><path d="M9 10Q6 19 15 20 19 20 21.500 18.500 17 25 10 23.500 2 21 3.500 14 5 9 9 10Z" fill="#0d4f9f" /><path d="M15.500 13Q14 9 10.500 10.500 9 15 14 17.500 18 18.500 22 16.500 18 17 15.500 13Z" fill="#1d2b31" /></S>],
  ["WeChat", <S key="w"><path d="M9 2Q17 2 17 9 17 16 9 16L4 18 4 15Q0 13 0 9 0 2 9 2Z" fill="#3bcb60" /><circle cx="6" cy="7" r="1.200" fill="#15602c" /><circle cx="12" cy="7" r="1.200" fill="#15602c" /><path d="M17 9Q24 9 24 15 24 18 22 19.500L22 22 19 21Q10 22 10 15 10 9 17 9Z" fill="#ededee" /><circle cx="14.500" cy="13.500" r="1" fill="#777" /><circle cx="19.500" cy="13.500" r="1" fill="#777" /></S>],
  ["Explorer", <S key="x"><path d="M1 3H9L11 5H22V8H1Z" fill="#d9a63a" /><path d="M1 6H23V20H1Z" fill="#f5cf62" /><path d="M5 12H20V21H16V16H9V21H5Z" fill="#4a90cf" /></S>],
  ["Music", <S key="m"><rect width="24" height="24" rx="5" fill="#d5102c" /><path d="M14 4.500Q11.500 5 12 8L13 13Q13 15.500 11 15.200 9 15 9 12.500 9.500 9 14 9 18 9.500 18 13.500 17.500 19 12 19 6 18.500 5.500 13 5.500 9 9 7.500M14 4.500Q16 4 17 5.500" stroke="#fff" strokeWidth="1.900" strokeLinecap="round" /></S>],
  ["Live", <S key="l"><rect width="24" height="24" rx="2" fill="#49addf" /><path d="M2 2H11M13 3H15" stroke="#e9f6fc" strokeWidth="2" strokeDasharray="1.500 .7" /><path d="M4 17Q2 7 9 6 12 3 15 6 21 7 19 15L21 21H3Z" fill="#e6f4fb" /><path d="M16 2 22 1V7L18 6Z" fill="#f5fbff" stroke="#1d5c94" strokeWidth=".8" /><path d="M7.500 13Q8 9 12 9.500 16 9 16.500 13 16 17 12 17 8 17 7.500 13Z" fill="#fbe6de" /><path d="M6 12 9 8 11 11 13 8 17 12 15 7H8Z" fill="#a9d9f1" /><circle cx="10" cy="13.500" r="1" fill="#2464a8" /><circle cx="14" cy="13.500" r="1" fill="#2464a8" /><path d="M1 16 5 20 8 18 12 22 17 18 22 22M2 22H8" stroke="#1f7fc0" strokeWidth="1.500" /></S>],
  ["AutoCAD", <S key="a"><defs><linearGradient id="ac" x1="0" y1="0" x2="0" y2="1"><stop offset="0" stopColor="#e23a36" /><stop offset="1" stopColor="#fbe3e1" /></linearGradient></defs><rect width="24" height="24" fill="url(#ac)" /><path d="M11 3H13.500L19.500 19H14L12 16.500 10 19H5Z" fill="#9c1013" /><path d="M12.200 3H13.500L19.500 19H14L12.200 16.500Z" fill="#c4272a" /></S>],
  ["CAM", <S key="c"><path d="M1 10 7 6 9 8 12 2 12 10 14 12 12 18 6 20 3 17Z" fill="#d3d6da" /><path d="M3 12 8 10 11 12 9 18" stroke="#6f767e" /><path d="M20 3 9 16 16 20ZM15 12 14 16" stroke="#d8cf4d" strokeWidth="1.800" /></S>],
  ["Board", <S key="b"><path d="M4.500 2H19.500L23 19V22H1V19Z" fill="#b9764a" /><path d="M1 19.500H23V22H1Z" fill="#7a4521" /><path d="M8 4.500H16" stroke="#3a1f0c" strokeWidth="1.500" /><path d="M7 8 6 18M18 8 19 18" stroke="#c98a5c" /></S>],
  ["Cabinet", <S key="d"><rect x="5" y="2" width="14" height="20" fill="#9a5f33" /><path d="M7.500 4H16.500V8H7.500ZM7.500 10H16.500V14H7.500ZM7.500 16H16.500V20H7.500Z" fill="#3a2413" /></S>],
];

const menus = ["编辑(E)", "视图(V)", "插入(I)", "格式(O)", "工具(T)", "绘图(D)", "标注(N)", "修改(M)", "参数(P)", "窗口(W)", "帮助(H)", "M_批打印"];
const history = ["指定点或 [水平(H)/垂直(V)/角度(A)/二等分(B)/偏移(O)]:", "指定通过点:", "指定通过点: *取消*"];
const splitAscii = (s) => s.split(/([\x20-\x7e]+)/).filter(Boolean).map((t, i) => (/^[\x20-\x7e]/.test(t) ? <Ascii key={i}>{t}</Ascii> : t));

export default function App() {
  return (
    <Shell>
      <Global />
      <TitleBar>
        <QuickAccess>
          <QuickButton aria-label="保存" $w={20}><Icon name="save" size={16} /></QuickButton>
          <QuickButton aria-label="另存为"><Icon name="saveAs" size={17} /></QuickButton>
          <QuickButton aria-label="打印"><Icon name="print" size={17} /></QuickButton>
          <QuickButton aria-label="放弃"><Icon name="undo" size={17} /></QuickButton>
          <QuickButton aria-label="放弃列表" $w={13}><Caret /></QuickButton>
          <QuickButton aria-label="重做"><Icon name="redoDim" size={17} /></QuickButton>
          <QuickButton aria-label="重做列表" $w={12}><Caret /></QuickButton>
          <QuickButton aria-label="工作空间"><Icon name="workspace" size={17} /></QuickButton>
          <QuickButton aria-label="自定义" $w={16}><More /></QuickButton>
        </QuickAccess>
        <Title><span>Autodesk AutoCAD 2016</span><span>Plate_20220521_171251-0-YX背板.dxf</span></Title>
        <InfoCenter>
          <InfoArrow aria-label="展开" />
          <Search aria-label="搜索" placeholder="键入关键字或短语" />
          <QuickButton aria-label="查找"><Icon name="binoc" size={16} /></QuickButton>
          <QuickButton aria-label="账户"><Icon name="user" size={16} /></QuickButton>
          <SignIn>登录<Caret /></SignIn>
          <QuickButton aria-label="交换"><Icon name="exchange" size={16} /></QuickButton>
          <QuickButton aria-label="A360"><Icon name="a360" size={16} /></QuickButton>
          <QuickButton aria-label="更多" $w={8}><Caret /></QuickButton>
          <Rule />
          <QuickButton as="span"><HelpBadge aria-label="帮助">?</HelpBadge></QuickButton>
          <QuickButton aria-label="帮助列表" $w={12}><Caret /></QuickButton>
        </InfoCenter>
        <Minimize aria-label="最小化" />
      </TitleBar>

      <MenuBar>{menus.map((m) => <MenuItem key={m}>{m}</MenuItem>)}</MenuBar>

      <FileTabs>
        <FileTab $w={48} aria-label="开始" />
        <FileTab $w={188}>融创西羲里8幢13单元2602*<Close>✕</Close></FileTab>
        <FileTab $w={256} $on>Plate_20220521_171251-0-YX背板.dxf*<Close $on>✕</Close></FileTab>
        <PlusTab $m="0 0 3px 6px" $r="3px 8px 3px 8px" aria-label="新图形">+</PlusTab>
      </FileTabs>

      <Toolbars>
        <ToolRow $gap={1}>
          <Group $open $pad={4}><Tools names="dimA dimB dimC freeze cmd" /></Group>
          <Group><Grip /><Tools names="newFile open save | print preview publish print3d | cut copy paste match matchP | undo v redo v | hand zoomRt zoomWin zoomPrev | props dc tool sheet markup calc | help" /></Group>
          <Group>
            <Grip /><Tools names="styleA" /><Select label="文字样式" value="Standard" /><Divider />
            <Tools names="styleD" /><Select label="标注样式" value="Standard" /><Divider />
            <Tools names="styleT" /><Select label="表格样式" value="Standard" pad={5} /><Divider />
            <Tools names="styleL" /><Select label="多重引线样式" value="Standard" />
          </Group>
        </ToolRow>
        <ToolRow $gap={1}>
          <Group $open><Select label="图层" value="0" w={235} pad={22} layer /><Tools names="layer1 layer2 layer3" /></Group>
          <Group><Grip /><Tools names="dLin dAli dArc dOrd | dRad dJog dDia dAng | dQuick dBase dCont dSpace dBreak | tol center inspect jogLin | dimEd dimTx dimUp |" /><Select label="当前标注样式" value="Standard" /><Tools names="styleD" /></Group>
          <Group><Grip /><Tools names="line xline pline polygon rect arc circle cloud spline ellipse ellArc insert block point hatch gradient region table mtext addSel" /></Group>
        </ToolRow>
        <ToolRow $gap={0}>
          <Group $open><Select label="颜色" value="" w={62} pad={0} /><Divider /></Group>
          <Group $open><Select label="线型" value="ByLayer" w={159} pad={69} line={60} serif /><Divider /></Group>
          <Group $open><Select label="线宽" value="ByLayer" w={124} pad={44} line={35} serif /><Divider /></Group>
          <Group $open><Select label="打印样式" value="ByColor" w={119} pad={10} serif off /></Group>
        </ToolRow>
      </Toolbars>

      <Canvas>
        <Drawing fill="none" stroke="#e6e8ea" strokeWidth="1.200">
          <g transform="translate(0 -156)">
            <text x="-1" y="175" fontSize="14" fontFamily="Noto Sans CJK SC" fill="#06090c" stroke="none">框</text>
            <path d="M0 582.500H4000" />
            <path d="M0 377.500H77.500V612.500M101.500 612.500V377.500H195.500V394.500H282A405 405 0 0 1 258 853Q255 857.500 251 857.500H213Q209 857.500 205 854A199 199 0 0 0 0 839" />
            <path d="M83.500 618.500H95.500A6 6 0 1 0 101.500 612.500H128M83.500 618.500A6 6 0 1 1 77.500 612.500H101.500M73.500 607.500H82.500V616.500H73.500Z" />
            <text x="79" y="558" fontSize="19" fontFamily="Lato" fontWeight="300" fill="#fff" stroke="none">Y</text>
            <text x="132" y="611" fontSize="19" fontFamily="Lato" fontWeight="300" fill="#fff" stroke="none">X</text>
            <path stroke="#191a80" strokeWidth="2.500" d="M215 512Q240 522 260 549 283 578 282 612 280 660 267 695 261 711 247 731 237 747 237 765 210 737 193 702 178 672 177.500 648 178 620 192 599 205 580 212 560 222 530 215 512ZM0 625Q4 645 0 665" />
            <path d="M973.500 318.500H1291A386 386 0 0 1 1298 841.500Q1291 847.500 1282 847.500H1236Q1226 847.500 1217 840A130 130 0 0 0 1046 841Q1039 847.500 1029 847.500H982Q973 847.500 967 841A385 385 0 0 1 973.500 318.500M1006.500 318.500V847.500" />
            <path stroke="#fff" d="M1015.500 484V524.500M1015.500 541V581M967 532.500H1007M1024 532.500H1064M1007.500 524.500H1023.500V540.500H1007.500Z" />
          </g>
        </Drawing>
        <CommandDock>
          <History>{history.map((h, i) => <HistoryLine key={i} $on={i === 2}>{splitAscii(h)}</HistoryLine>)}</History>
          <CommandBar>
            <CommandTools><CommandGrip /><PlainButton aria-label="关闭">✕</PlainButton><PlainButton aria-label="自定义"><Icon name="wrench" size={14} /></PlainButton></CommandTools>
            <Prompt aria-label="最近的命令">&gt;_</Prompt>
            <QuickButton as="span" $w={6}><Caret $c="#55565a" /></QuickButton>
            <CommandInput aria-label="命令" placeholder="键入命令" />
            <UpButton aria-label="历史记录" />
          </CommandBar>
        </CommandDock>
      </Canvas>

      <StatusBar>
        <LayoutTabs>
          <LayoutTab $w={30} $align="right">Layout1</LayoutTab>
          <LayoutTab $w={71}>Layout2</LayoutTab>
          <PlusTab $m="0" $h={16} $r="3px 3px 8px 8px" aria-label="新建布局">+</PlusTab>
        </LayoutTabs>
        <StatusGroup><Coords>708.9309, 60.6855, 0.0000</Coords></StatusGroup>
        <StatusGroup><StatusText $pad={2}>模型</StatusText></StatusGroup>
        <StatusGroup><StatusItems names="grid snap v" /></StatusGroup>
        <StatusGroup><StatusItems names="infer | dyn | ortho polar v iso v | otrack osnap v | lwt | transp | cycle | osnap3 v" /></StatusGroup>
        <StatusGroup><StatusItems names="ducs cube v gizmo v" /></StatusGroup>
        <StatusGroup><StatusItems names="annoB annoY annoA" /><StatusText $w={64}>1:1 / 100%</StatusText><StatusItems names="v" /></StatusGroup>
        <StatusGroup><StatusItems names="gear v | plus" /></StatusGroup>
        <StatusGroup><StatusItems names="ruler" /><StatusText $w={56}>小数</StatusText><StatusItems names="v | qprops" /></StatusGroup>
        <StatusGroup><StatusItems names="lockUi v | isolate" /></StatusGroup>
        <StatusGroup><StatusItems names="perf" /></StatusGroup>
      </StatusBar>

      <Taskbar>
        <Apps>{apps.map(([name, art]) => <TaskButton key={name} aria-label={name} $on={name === "AutoCAD"}>{art}</TaskButton>)}</Apps>
        <Tray>
          <Svg width="14" height="16" viewBox="0 0 14 16" fill="none" stroke="#f0f0f0" strokeWidth="1.400"><path d="M1 11 7 5 13 11" /></Svg>
          <Svg width="16" height="20" viewBox="0 0 16 20"><ellipse cx="8" cy="11" rx="6.500" ry="7" fill="#0c0c0e" /><ellipse cx="8" cy="5.500" rx="4.500" ry="5" fill="#0c0c0e" /><ellipse cx="8" cy="13" rx="4" ry="4.500" fill="#f4f4f4" /><circle cx="6.500" cy="4.500" r="1.300" fill="#fff" /><circle cx="9.500" cy="4.500" r="1.300" fill="#fff" /><path d="M5.500 7H10.500L8 8.500Z" fill="#f0a020" /><path d="M2.500 9Q8 12 13.500 9V11Q8 13 5 11.500V14H3.500Z" fill="#d8262c" /><path d="M2 17.500H7V19.500H2ZM9 17.500H14V19.500H9Z" fill="#f0a020" /></Svg>
          <Svg width="17" height="14" viewBox="0 0 17 14" fill="none" stroke="#eee"><path d="M1.500 1V3M4.500 1V3M.5 3.500H5.500V6L3 8 .5 6ZM3 8V13M6 3.500H15.500V11.500H5M8 5.500 12 9.500M12 5.500 8 9.500" /></Svg>
          <Svg width="16" height="16" viewBox="0 0 16 16" fill="none" stroke="#eee" strokeWidth="1.100"><path d="M2 15A13 13 0 0 1 15 2M5.500 15A9.500 9.500 0 0 1 15 5.500M8.500 15A6.500 6.500 0 0 1 15 8.500" /><circle cx="13" cy="13.500" r="1.500" fill="#eee" /></Svg>
          <Svg width="16" height="14" viewBox="0 0 16 14" fill="none" stroke="#eee" strokeWidth="1.100"><path d="M1 5H3.500L7 1.500V12.500L3.500 9H1ZM9.500 4.500Q11 7 9.500 9.500M11.500 2.500Q14 7 11.500 11.500" /><path d="M13.500 1Q17 7 13.500 13" stroke="#777" /></Svg>
          <span>ENG</span>
        </Tray>
      </Taskbar>
    </Shell>
  );
}
